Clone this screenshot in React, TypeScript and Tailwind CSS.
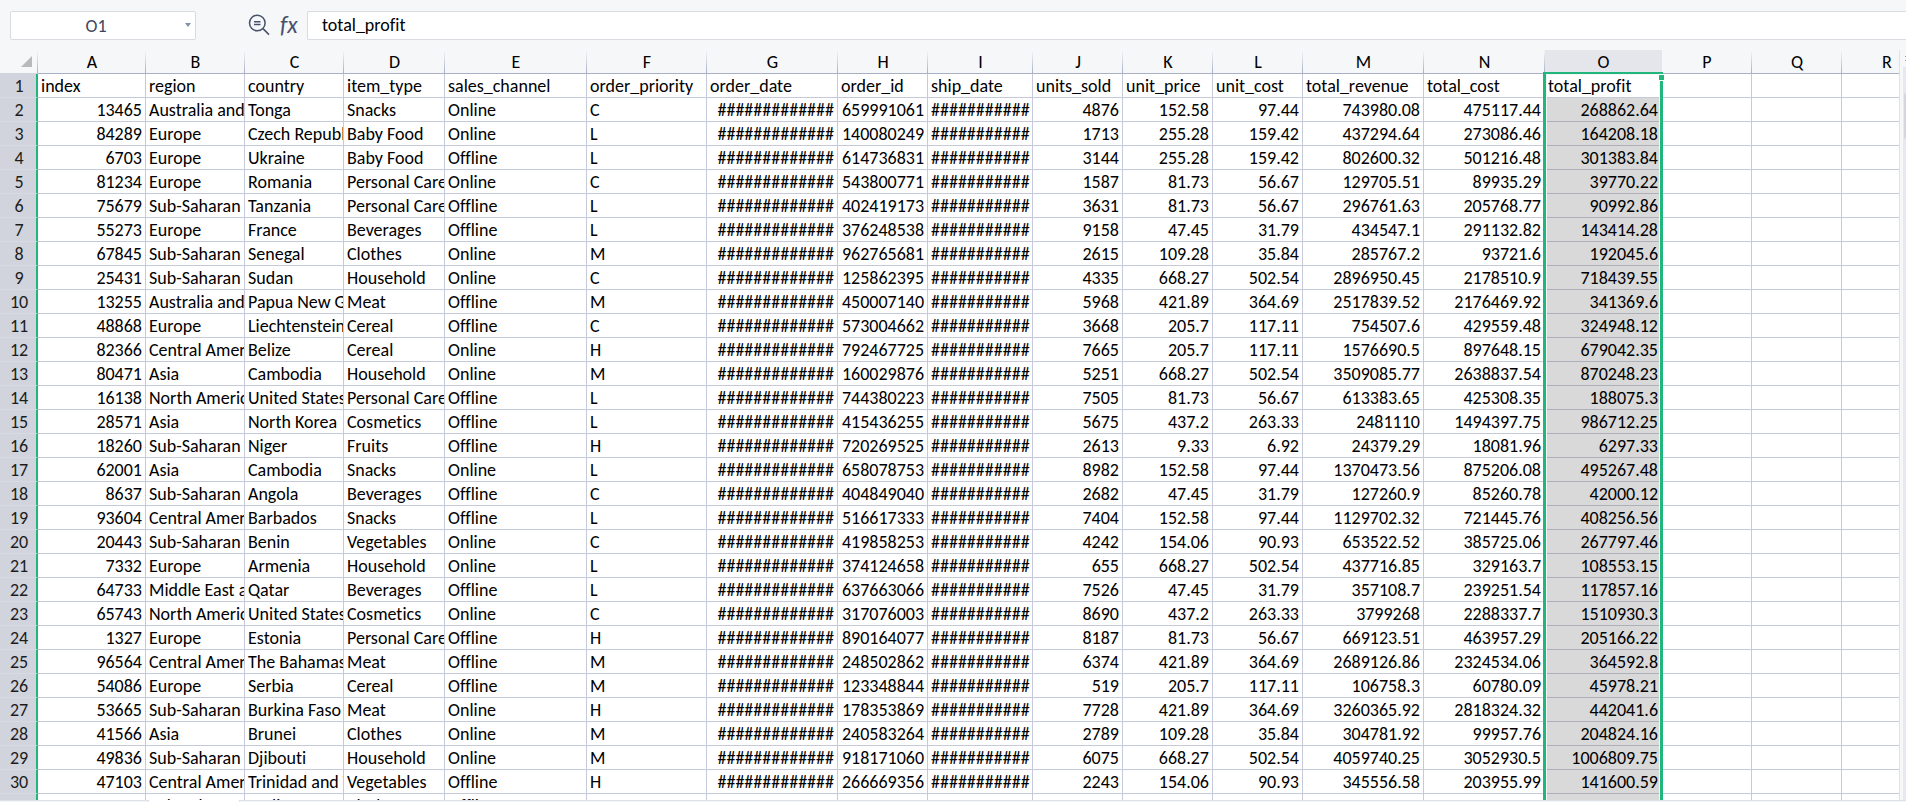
import { useState } from 'react';

interface Column {
  name: string;
  width: string;
  numeric?: boolean;
}

const COLUMNS: Column[] = [
  { name: 'A', width: 'w-[108px]', numeric: true },
  { name: 'B', width: 'w-[99px]' },
  { name: 'C', width: 'w-[99px]' },
  { name: 'D', width: 'w-[101px]' },
  { name: 'E', width: 'w-[142px]' },
  { name: 'F', width: 'w-[120px]' },
  { name: 'G', width: 'w-[131px]', numeric: true },
  { name: 'H', width: 'w-[90px]', numeric: true },
  { name: 'I', width: 'w-[105px]', numeric: true },
  { name: 'J', width: 'w-[90px]', numeric: true },
  { name: 'K', width: 'w-[90px]', numeric: true },
  { name: 'L', width: 'w-[90px]', numeric: true },
  { name: 'M', width: 'w-[121px]', numeric: true },
  { name: 'N', width: 'w-[121px]', numeric: true },
  { name: 'O', width: 'w-[117px]', numeric: true },
  { name: 'P', width: 'w-[90px]' },
  { name: 'Q', width: 'w-[90px]' },
  { name: 'R', width: 'w-[90px]' },
];

const SELECTED = 'O';

const HEADINGS = [
  'index', 'region', 'country', 'item_type', 'sales_channel', 'order_priority', 'order_date', 'order_id',
  'ship_date', 'units_sold', 'unit_price', 'unit_cost', 'total_revenue', 'total_cost', 'total_profit',
];

// index|region|country|item|channel|priority|order id|units|price|cost|revenue|total cost|profit
const RECORDS = `13465|Australia and|Tonga|Snacks|Online|C|659991061|4876|152.58|97.44|743980.08|475117.44|268862.64
84289|Europe|Czech Republic|Baby Food|Online|L|140080249|1713|255.28|159.42|437294.64|273086.46|164208.18
6703|Europe|Ukraine|Baby Food|Offline|L|614736831|3144|255.28|159.42|802600.32|501216.48|301383.84
81234|Europe|Romania|Personal Care|Online|C|543800771|1587|81.73|56.67|129705.51|89935.29|39770.22
75679|Sub-Saharan|Tanzania|Personal Care|Offline|L|402419173|3631|81.73|56.67|296761.63|205768.77|90992.86
55273|Europe|France|Beverages|Offline|L|376248538|9158|47.45|31.79|434547.1|291132.82|143414.28
67845|Sub-Saharan|Senegal|Clothes|Online|M|962765681|2615|109.28|35.84|285767.2|93721.6|192045.6
25431|Sub-Saharan|Sudan|Household|Online|C|125862395|4335|668.27|502.54|2896950.45|2178510.9|718439.55
13255|Australia and|Papua New Guinea|Meat|Offline|M|450007140|5968|421.89|364.69|2517839.52|2176469.92|341369.6
48868|Europe|Liechtenstein|Cereal|Offline|C|573004662|3668|205.7|117.11|754507.6|429559.48|324948.12
82366|Central America|Belize|Cereal|Online|H|792467725|7665|205.7|117.11|1576690.5|897648.15|679042.35
80471|Asia|Cambodia|Household|Online|M|160029876|5251|668.27|502.54|3509085.77|2638837.54|870248.23
16138|North America|United States|Personal Care|Offline|L|744380223|7505|81.73|56.67|613383.65|425308.35|188075.3
28571|Asia|North Korea|Cosmetics|Offline|L|415436255|5675|437.2|263.33|2481110|1494397.75|986712.25
18260|Sub-Saharan|Niger|Fruits|Offline|H|720269525|2613|9.33|6.92|24379.29|18081.96|6297.33
62001|Asia|Cambodia|Snacks|Online|L|658078753|8982|152.58|97.44|1370473.56|875206.08|495267.48
8637|Sub-Saharan|Angola|Beverages|Offline|C|404849040|2682|47.45|31.79|127260.9|85260.78|42000.12
93604|Central America|Barbados|Snacks|Offline|L|516617333|7404|152.58|97.44|1129702.32|721445.76|408256.56
20443|Sub-Saharan|Benin|Vegetables|Online|C|419858253|4242|154.06|90.93|653522.52|385725.06|267797.46
7332|Europe|Armenia|Household|Online|L|374124658|655|668.27|502.54|437716.85|329163.7|108553.15
64733|Middle East and|Qatar|Beverages|Offline|L|637663066|7526|47.45|31.79|357108.7|239251.54|117857.16
65743|North America|United States|Cosmetics|Online|C|317076003|8690|437.2|263.33|3799268|2288337.7|1510930.3
1327|Europe|Estonia|Personal Care|Offline|H|890164077|8187|81.73|56.67|669123.51|463957.29|205166.22
96564|Central America|The Bahamas|Meat|Offline|M|248502862|6374|421.89|364.69|2689126.86|2324534.06|364592.8
54086|Europe|Serbia|Cereal|Offline|M|123348844|519|205.7|117.11|106758.3|60780.09|45978.21
53665|Sub-Saharan|Burkina Faso|Meat|Online|H|178353869|7728|421.89|364.69|3260365.92|2818324.32|442041.6
41566|Asia|Brunei|Clothes|Online|M|240583264|2789|109.28|35.84|304781.92|99957.76|204824.16
49836|Sub-Saharan|Djibouti|Household|Online|M|918171060|6075|668.27|502.54|4059740.25|3052930.5|1006809.75
47103|Central America|Trinidad and Tobago|Vegetables|Offline|H|266669356|2243|154.06|90.93|345556.58|203955.99|141600.59`;

// The date columns are too narrow for their values, so they show hashes
const rows = RECORDS.split('\n').map((line) => {
  const f = line.split('|');
  return [...f.slice(0, 6), '#############', f[6], '###########', ...f.slice(7)];
});

const sheet = [HEADINGS, ...rows, ['', 'Sub-Saharan', 'Mali', 'Clothes', 'Offline']];

function FormulaBar() {
  const [cell, setCell] = useState('O1');
  const [formula, setFormula] = useState('total_profit');

  return (
    <div className="flex h-[50px] shrink-0 items-center pl-2.5">
      <div className="flex h-[29px] w-[186px] items-center rounded-xs border border-[#d8dbe0] bg-white pr-1">
        <input
          aria-label="Name box"
          value={cell}
          onChange={(e) => setCell(e.target.value)}
          className="h-full w-full min-w-0 pt-0.5 pr-1 text-center text-[#3d465e] outline-none"
        />
        <button type="button" aria-label="Show names" className="shrink-0">
          <svg className="h-[4px] w-[6px]" viewBox="0 0 6 4" fill="#8390ad">
            <path d="M0 0h6L3 4z" />
          </svg>
        </button>
      </div>
      <button type="button" aria-label="Find formula" className="ml-[52px]">
        <svg className="h-[22px] w-[22px]" viewBox="0 0 22 22" fill="none" stroke="#48516b" strokeWidth={1.5}>
          <circle cx="9.3" cy="9" r="7.8" />
          <path d="M6 7.8h6.5M6 10.6h6.5M15 14.6l6 6" />
        </svg>
      </button>
      <button type="button" aria-label="Insert function" className="ml-2.5 w-[20px] text-left text-2xl leading-7 text-[#48516b] italic">
        fx
      </button>
      <input
        aria-label="Formula"
        value={formula}
        onChange={(e) => setFormula(e.target.value)}
        className="ml-[7px] h-[29px] min-w-0 flex-1 rounded-l-xs border border-r-0 border-[#d8dbe0] bg-white pl-3.5 outline-none"
      />
    </div>
  );
}

function SelectionFrame() {
  return (
    <div className="pointer-events-none absolute top-[22px] -right-px -left-[2px] z-10 h-[200vh] border-x-3 border-t-2 border-[#21b77c] shadow-[inset_0_0_0_1px_#f4f5f7]">
      <div className="absolute top-0 -right-[5px] size-[7px] border border-white bg-[#21b77c]" />
    </div>
  );
}

function Grid() {
  return (
    <table className="w-px table-fixed border-separate border-spacing-0 leading-[22px] whitespace-nowrap">
      <colgroup>
        <col className="w-[38px]" />
        {COLUMNS.map((c) => (
          <col key={c.name} className={c.width} />
        ))}
      </colgroup>
      <thead>
        <tr>
          <th className="h-6 border-b border-[#d1d4dc] bg-[linear-gradient(to_bottom,transparent,#a9b0c6)] bg-[length:1px_100%] bg-right bg-no-repeat p-0 pr-[6px]">
            <svg className="ml-auto h-[11px] w-[11px]" viewBox="0 0 11 11" fill="#b9b9b9">
              <path d="M11 0v11H0z" />
            </svg>
          </th>
          {COLUMNS.map((c) =>
            c.name === SELECTED ? (
              <th key={c.name} scope="col" className="relative h-6 border-b border-[#a9b0c6] bg-[#e4e6eb] p-0 pt-px font-normal">
                {c.name}
                <SelectionFrame />
              </th>
            ) : (
              <th
                key={c.name}
                scope="col"
                className="h-6 border-b border-[#a9b0c6] bg-[linear-gradient(to_bottom,transparent,#a9b0c6)] bg-[length:1px_100%] bg-right bg-no-repeat p-0 pt-px font-normal"
              >
                {c.name}
              </th>
            ),
          )}
        </tr>
      </thead>
      <tbody>
        {sheet.map((row, r) => (
          <tr key={r}>
            <th
              scope="row"
              className="h-6 border-r-2 border-b border-r-[#21b77c] border-b-[#d7dae4] bg-[#d1d4dc] p-0 pt-px pl-0.5 font-normal text-[#1c1c1c]"
            >
              {r < 30 ? r + 1 : ''}
            </th>
            {COLUMNS.map((c, i) => {
              const align = c.numeric && r > 0 ? 'text-right' : 'text-left';
              const tone = c.name === SELECTED && r > 0 ? 'border-[#adb0bb] bg-[#d9d9d9]' : 'border-[#c5c9da] bg-white';
              return (
                <td key={c.name} className={`h-6 overflow-hidden border-r border-b px-[3px] pt-px pb-0 ${align} ${tone}`}>
                  {row[i]}
                </td>
              );
            })}
          </tr>
        ))}
      </tbody>
    </table>
  );
}

function ScrollBar() {
  return (
    <div className="flex w-[7px] shrink-0 flex-col border-l border-[#dfe1e8] pl-[3px]">
      <div className="flex h-[17px] shrink-0 flex-col items-end gap-[3px] pt-1.5">
        <span className="h-px w-px bg-[#9a9da8]" />
        <span className="h-px w-px bg-[#9a9da8]" />
      </div>
      <div className="flex-1 bg-[#e8e9f0] pt-[26px] pl-px">
        <div className="h-[46px] rounded-l-sm bg-[#d5d7df]" />
      </div>
    </div>
  );
}

export default function App() {
  return (
    <div className="flex h-screen flex-col overflow-hidden bg-[#f5f7f9] font-[Calibri,Carlito,Lato,sans-serif] text-[18px] text-black [font-variant-ligatures:none]">
      <FormulaBar />
      <div className="flex min-h-0 flex-1">
        <div className="min-w-0 flex-1 overflow-hidden">
          <Grid />
        </div>
        <ScrollBar />
      </div>
      {/* top edge of the sheet tabs */}
      <div className="flex h-0.5 shrink-0">
        <div className="w-[149px] border-t border-r border-[#dfe1e8]" />
        <div className="w-[90px] bg-white" />
        <div className="flex-1 border-t border-l border-[#dfe1e8]" />
      </div>
    </div>
  );
}
